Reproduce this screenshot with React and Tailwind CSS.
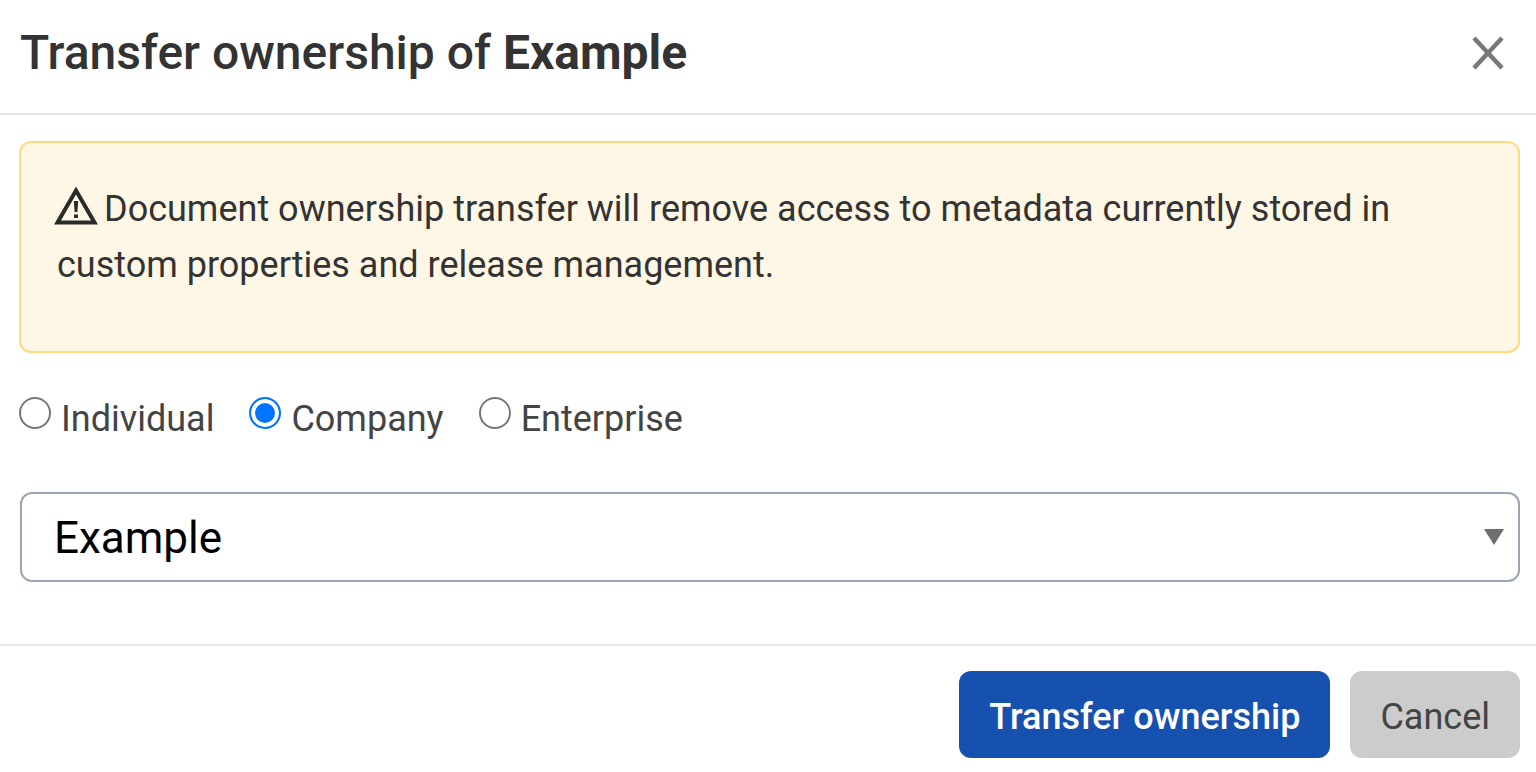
import { useState } from 'react'

const OWNER_TYPES = [
  { value: 'individual', label: 'Individual' },
  { value: 'company', label: 'Company' },
  { value: 'enterprise', label: 'Enterprise' },
]

function WarningIcon() {
  return (
    <svg viewBox="0 0 44 38" className="mr-1.5 -ml-[3px] inline-block h-[38px] w-11 align-[-4px]" aria-hidden="true">
      <path d="M22 3.5 L40.5 35.5 H3.5 Z" fill="none" stroke="#2a2a2a" strokeWidth="4" />
      <path d="M19.8 14 H24.2 L23.4 25 H20.6 Z M20 27.5 H24 V31 H20 Z" fill="#2a2a2a" />
    </svg>
  )
}

export default function App() {
  const [ownerType, setOwnerType] = useState('company')
  const [owner, setOwner] = useState('Example')

  return (
    <div
      role="dialog"
      aria-labelledby="dialog-title"
      className="w-full bg-white font-['Roboto','Liberation_Sans',sans-serif] text-[#333]"
    >
      {/* Header */}
      <div className="flex items-center justify-between border-b-2 border-[#e3e5e8] px-5 pt-6 pb-8">
        <h1 id="dialog-title" className="text-[48px] leading-[57px] font-medium">
          Transfer ownership of <strong className="font-bold">Example</strong>
        </h1>
        <button type="button" aria-label="Close" className="mr-3 text-[#777]">
          <svg viewBox="0 0 32 34" className="h-[34px] w-8" fill="none" stroke="currentColor" strokeWidth="4.5">
            <path d="M2 2 L30 32 M30 2 L2 32" />
          </svg>
        </button>
      </div>

      {/* Body */}
      <div className="pt-[26px] pr-4 pb-[62px] pl-5">
        <div
          role="alert"
          className="-ml-px min-h-[212px] rounded-xl border-2 border-[#ffdb80] bg-[#fff7e6] px-9 pt-[38px] pb-14 text-[36px] leading-14"
        >
          <WarningIcon />
          Document ownership transfer will remove access to metadata currently stored in custom
          properties and release management.
        </div>

        <div role="radiogroup" aria-label="New owner type" className="mt-9 flex gap-9">
          {OWNER_TYPES.map(({ value, label }) => (
            <label key={value} className="flex items-start gap-[10px] text-[36px] text-[#444]">
              <input
                type="radio"
                name="ownerType"
                value={value}
                checked={ownerType === value}
                onChange={() => setOwnerType(value)}
                className="mt-2 -ml-px h-8 w-8 shrink-0 appearance-none rounded-full border-2 border-[#767676] bg-white checked:border-[#0075ff] checked:bg-[#0075ff] checked:shadow-[inset_0_0_0_4px_#fff]"
              />
              <span className="pt-0.5 leading-14">{label}</span>
            </label>
          ))}
        </div>

        <div className="relative mt-[45px]">
          <select
            aria-label="New owner"
            value={owner}
            onChange={(e) => setOwner(e.target.value)}
            className="block h-[90px] w-full appearance-none rounded-xl border-2 border-[#9aa5b1] bg-white pt-0.5 pr-16 pl-8 text-[44px] text-black"
          >
            <option>Example</option>
          </select>
          <svg
            viewBox="0 0 20 16"
            className="pointer-events-none absolute top-1/2 right-4 h-4 w-5 -translate-y-1/2"
            aria-hidden="true"
          >
            <path d="M0 0 H20 L10 16 Z" fill="#6e6e6e" />
          </svg>
        </div>
      </div>

      {/* Footer */}
      <div className="flex justify-end gap-5 border-t-2 border-[#e5e5e5] px-4 pt-[25px] pb-[14px] text-[36px]">
        <button type="button" className="h-[87px] rounded-xl bg-[#1651b0] px-[30px] pt-1 font-medium text-white">
          Transfer ownership
        </button>
        <button type="button" className="h-[87px] rounded-xl bg-[#ccc] px-[30px] pt-1 text-[#444]">
          Cancel
        </button>
      </div>
    </div>
  )
}
